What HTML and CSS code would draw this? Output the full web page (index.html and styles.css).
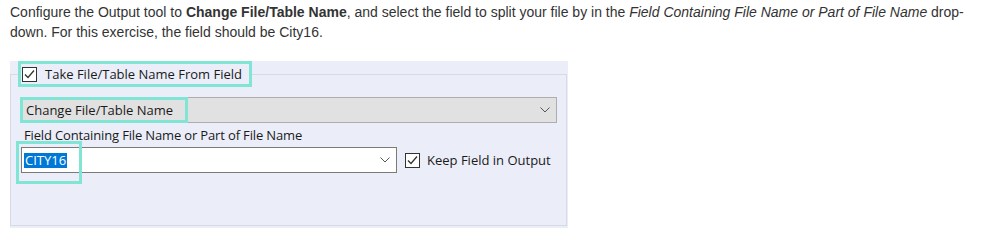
FILE: index.html
```html
<!DOCTYPE html>
<html lang="en">
<head>
  <meta charset="UTF-8">
  <meta name="viewport" content="width=device-width, initial-scale=1.0">
  <title>Output tool - Change File/Table Name</title>
  <link rel="stylesheet" href="styles.css">
</head>
<body>
  <p class="intro">Configure the Output tool to <b>Change File/Table Name</b>, and select the field to split your file by in the <i>Field Containing File Name or Part of File Name</i> drop-down. For this exercise, the field should be City16.</p>

  <div class="panel">
    <fieldset class="group">
      <legend class="group_title mark">
        <span class="check">
          <svg viewBox="0 0 13 13" width="13" height="13"><path d="M2 6.5 L5 9.5 L11 2.5" fill="none" stroke="#333" stroke-width="1.3"/></svg>
        </span>
        <span>Take File/Table Name From Field</span>
      </legend>

      <div class="select select_gray">
        <span class="select_text mark">Change File/Table Name</span>
        <svg class="chevron" viewBox="0 0 10 6" width="10" height="6"><path d="M0.5 0.5 L5 5 L9.5 0.5" fill="none" stroke="#555" stroke-width="1"/></svg>
      </div>

      <div class="label">Field Containing File Name or Part of File Name</div>

      <div class="row">
        <div class="select select_white field_select">
          <span class="selected">CITY16</span>
          <svg class="chevron" viewBox="0 0 10 6" width="10" height="6"><path d="M0.5 0.5 L5 5 L9.5 0.5" fill="none" stroke="#555" stroke-width="1"/></svg>
        </div>
        <label class="keep">
          <span class="check">
            <svg viewBox="0 0 13 13" width="13" height="13"><path d="M2 6.5 L5 9.5 L11 2.5" fill="none" stroke="#333" stroke-width="1.3"/></svg>
          </span>
          <span>Keep Field in Output</span>
        </label>
      </div>
    </fieldset>
  </div>
</body>
</html>
```

FILE: styles.css
```css
*{
  margin: 0;
  padding: 0;
  box-sizing: border-box;
}

body{
  font-family: "Liberation Sans", Arial, sans-serif;
  color: #333;
  background-color: #fff;
}

.intro{
  width: 966px;
  padding: 2px 0 0 10px;
  font-size: 14px;
  line-height: 20px;
}

/* windows style dialog */
.panel{
  width: 558px;
  margin: 19px 0 0 10px;
  padding-bottom: 2px;
  background-color: #ebeef9;
  font-family: "Open Sans", "Noto Sans", sans-serif;
  font-size: 13px;
  color: #1a1a1a;
}

.panel > .group{
  width: 557px;
  border: 1px solid #d6dae3;
  padding: 0 9px 52px 10px;
  margin: 0;
  min-width: 0;
}

.mark{
  border: 3px solid #80e5d5;
}

.group > .group_title{
  display: flex;
  align-items: center;
  gap: 8px;
  height: 26px;
  padding: 0 7px 0 1px;
  margin-left: -3px;
}

.check{
  display: flex;
  width: 15px;
  height: 15px;
  border: 1px solid #333;
  background-color: #fff;
}

.select{
  display: flex;
  align-items: center;
  justify-content: space-between;
  height: 26px;
  padding-right: 6px;
}

.select_gray{
  margin-top: 10px;
  background-color: #e1e1e1;
  border: 1px solid #adadad;
}

.select_gray > .select_text{
  display: flex;
  align-items: center;
  height: 26px;
  width: 168px;
  margin: -1px 0 0 -2px;
  padding-left: 3px;
}

.label{
  margin-top: 4px;
  padding-left: 3px;
  line-height: 16px;
  letter-spacing: -0.15px;
}

.row{
  display: flex;
  align-items: center;
  gap: 8px;
  margin-top: 4px;
}

.select_white{
  width: 376px;
  background-color: #fff;
  border: 1px solid #7a7a7a;
  padding-left: 2px;
}

.field_select{
  position: relative;
}

/* highlight frame round the chosen value */
.field_select::after{
  content: "";
  position: absolute;
  left: -6px;
  top: -7px;
  width: 60px;
  height: 37px;
  border: 3px solid #80e5d5;
}

.selected{
  background-color: #0078d7;
  color: #fff;
  line-height: 15px;
  padding: 0 1px;
}

.keep{
  display: flex;
  align-items: center;
  gap: 7px;
}
```
